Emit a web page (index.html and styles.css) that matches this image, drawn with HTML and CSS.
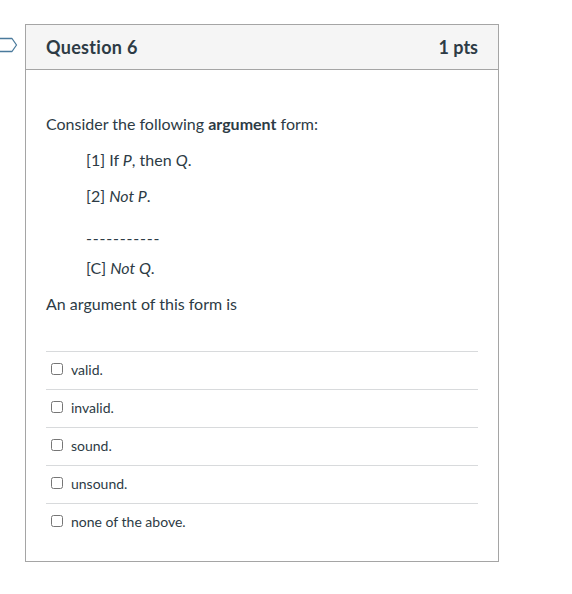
FILE: index.html
```html
<!DOCTYPE html>
<html lang="en">

<head>
    <meta charset="UTF-8">
    <meta name="viewport" content="width=device-width, initial-scale=1.0">
    <title>Question 6</title>
    <link rel="stylesheet" href="styles.css">
</head>

<body>
    <div class="quiz">
        <!-- Flag marker -->
        <div class="flag">
            <svg width="18" height="16" viewBox="0 0 18 16">
                <path d="M-2 1.5 H12 L16.5 8 L12 14.5 H-2" fill="none" stroke="#4a7a9c" stroke-width="1.3" stroke-linejoin="round"/>
            </svg>
        </div>

        <div class="question">
            <div class="question-header">
                <span class="question-name">Question 6</span>
                <span class="question-points">1 pts</span>
            </div>

            <div class="question-body">
                <p>Consider the following <strong>argument</strong> form:</p>
                <p class="indent">[1] If <em>P</em>, then <em>Q</em>.</p>
                <p class="indent">[2] <em>Not P</em>.</p>
                <p class="indent dashes">-----------</p>
                <p class="indent">[C] <em>Not Q</em>.</p>
                <p>An argument of this form is</p>

                <!-- Answers -->
                <div class="answers">
                    <label class="answer"><input type="checkbox"><span>valid.</span></label>
                    <label class="answer"><input type="checkbox"><span>invalid.</span></label>
                    <label class="answer"><input type="checkbox"><span>sound.</span></label>
                    <label class="answer"><input type="checkbox"><span>unsound.</span></label>
                    <label class="answer"><input type="checkbox"><span>none of the above.</span></label>
                </div>
            </div>
        </div>
    </div>
</body>

</html>
```

FILE: styles.css
```css
body {
    font-family: 'Lato', 'Liberation Sans', sans-serif;
    margin: 0;
    padding: 0;
    background-color: #fff;
    color: #2d3b45;
}

.quiz {
    display: flex;
    padding-top: 24px;
}

.flag {
    width: 25px;
    padding-top: 13px;
}

.flag svg {
    display: block;
}

.question {
    width: 472px;
    border: 1px solid #a5a5a5;
}

.question-header {
    display: flex;
    justify-content: space-between;
    align-items: center;
    height: 44px;
    padding: 0 20px;
    background-color: #f5f5f5;
    border-bottom: 1px solid #a5a5a5;
}

.question-name,
.question-points {
    font-size: 18px;
    font-weight: bold;
}

.question-name {
    letter-spacing: 0.3px;
}

.question-body {
    padding: 43px 20px 20px 20px;
    font-size: 16px;
}

.question-body p {
    margin: 0 0 15px 0;
    line-height: 21px;
}

.question-body .indent {
    padding-left: 40px;
}

.question-body .dashes {
    margin-top: 21px;
    margin-bottom: 9px;
    letter-spacing: 0.8px;
}

.answers {
    margin-top: 37px;
    font-size: 14px;
}

.answer {
    display: flex;
    align-items: center;
    height: 34px;
    padding-bottom: 3px;
    border-top: 1px solid #d8dadc;
    padding-left: 5px;
    color: #2d3b45;
}

.answer input {
    width: 12px;
    height: 12px;
    margin: 0 8px 0 0;
}
```
